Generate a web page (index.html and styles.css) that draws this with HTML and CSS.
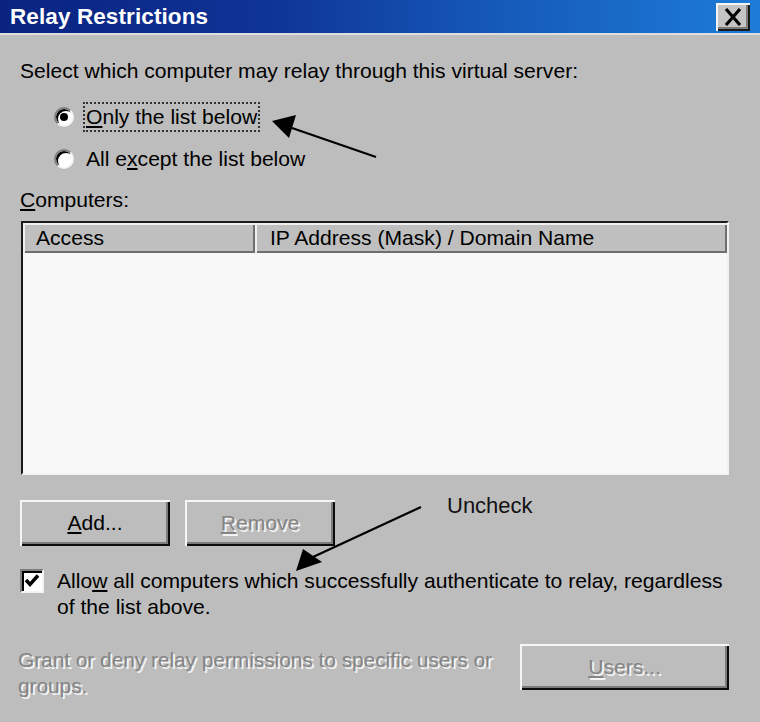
FILE: index.html
```html
<!DOCTYPE html>
<html>
<head>
<meta charset="utf-8">
<title>Relay Restrictions</title>
<link rel="stylesheet" href="styles.css">
</head>
<body>
<div class="window">
  <div class="titlebar">
    <span class="title">Relay Restrictions</span>
    <span class="close">
      <svg width="34" height="28" viewBox="0 0 34 28"><path d="M10 6 L24 22 M24 6 L10 22" stroke="#000" stroke-width="3.2" fill="none"/></svg>
    </span>
  </div>
  <div class="content">
    <p class="intro">Select which computer may relay through this virtual server:</p>
    <div class="radios">
      <div class="radio-row"><span class="radio checked"></span><span class="label focus"><u>O</u>nly the list below</span></div>
      <div class="radio-row"><span class="radio"></span><span class="label">All e<u>x</u>cept the list below</span></div>
    </div>
    <p class="caption"><u>C</u>omputers:</p>
    <div class="listbox">
      <div class="header">
        <div class="col col-access">Access</div>
        <div class="col col-ip">IP Address (Mask) / Domain Name</div>
      </div>
      <div class="list-body"></div>
    </div>
    <div class="buttons">
      <button class="btn btn-small"><u>A</u>dd...</button>
      <button class="btn btn-small disabled"><u>R</u>emove</button>
    </div>
    <div class="check-row">
      <span class="checkbox"><svg width="20" height="20" viewBox="0 0 20 20"><path d="M4 9 L8 13.5 L16 4.5" stroke="#000" stroke-width="3.4" fill="none"/></svg></span>
      <span class="check-label">Allo<u>w</u> all computers which successfully authenticate to relay, regardless<br>of the list above.</span>
    </div>
    <div class="users-row">
      <p class="disabled-text">Grant or deny relay permissions to specific users or<br>groups.</p>
      <button class="btn btn-users disabled"><u>U</u>sers...</button>
    </div>
  </div>
  <svg class="annot" width="760" height="722" viewBox="0 0 760 722">
    <line x1="292" y1="128" x2="376" y2="157" stroke="#000" stroke-width="2.2"/>
    <polygon points="272,121 296,115 289,138" fill="#000"/>
    <line x1="313" y1="557" x2="421" y2="507" stroke="#000" stroke-width="2.2"/>
    <polygon points="296,571 303,549 322,562" fill="#000"/>
  </svg>
  <span class="uncheck">Uncheck</span>
</div>
</body>
</html>
```

FILE: styles.css
```css
* { box-sizing: border-box; margin: 0; padding: 0; }
html, body { width: 760px; height: 722px; overflow: hidden; }
body {
  background: #bdbdbd;
  font-family: "Liberation Sans", Arial, sans-serif;
  font-size: 21.1px;
  color: #000;
}
u { text-decoration: underline; text-underline-offset: 2px; text-decoration-thickness: 2px; }

.window { position: relative; width: 760px; height: 722px; background: #bdbdbd; }

.titlebar {
  height: 35px;
  background: linear-gradient(90deg, #0a2380 0%, #0e3396 35%, #1559b8 65%, #1e7cd8 100%);
  border-bottom: 2px solid #dedede;
  display: flex;
  align-items: center;
  justify-content: space-between;
  padding: 0 10px;
}
.title {
  color: #fff;
  font-weight: bold;
  font-size: 22.5px;
  letter-spacing: 0.1px;
}
.close {
  width: 34px;
  height: 28px;
  background: #c4c4c4;
  box-shadow: inset 2px 2px 0 #f4f4f4, inset -2px -2px 0 #1a1a1a, inset -4px -4px 0 #7a7a7a;
  display: flex;
}

.content { padding: 0 31px 0 20px; }
.intro { margin-top: 23px; line-height: 26px; }

.radios { margin-top: 18px; display: flex; flex-direction: column; gap: 12px; }
.radio-row { height: 30px; display: flex; align-items: center; padding-left: 34px; gap: 9px; }
.radio {
  width: 20px; height: 20px; border-radius: 50%;
  background: #fff;
  border: 2px solid; border-color: #7e7e7e #f4f4f4 #f4f4f4 #7e7e7e;
  box-shadow: inset 2px 2px 0 #000;
  position: relative;
  flex: none;
}
.radio.checked::after {
  content: ""; position: absolute; left: 4px; top: 4px;
  width: 8px; height: 8px; border-radius: 50%; background: #000;
}
.label { height: 30px; line-height: 26px; padding: 0 1px; border: 2px dotted transparent; }
.label.focus { border-color: #333; }

.caption { margin-top: 13px; line-height: 26px; }

.listbox {
  margin-top: 8px;
  margin-left: 1px;
  height: 254px;
  border: 2px solid; border-color: #1a1a1a #f2f2f2 #f2f2f2 #1a1a1a;
  background: #f8f8f8;
  display: flex; flex-direction: column;
}
.header { height: 30px; display: flex; flex: none; }
.col {
  background: #bfbfbf;
  box-shadow: inset 2px 2px 0 #eeeeee, inset -2px -2px 0 #6e6e6e;
  line-height: 30px;
  padding-left: 13px;
}
.col-access { width: 232px; }
.col-ip { flex: 1; padding-left: 15px; }
.list-body { flex: 1; background: #f8f8f8; }

.buttons { margin-top: 25px; display: flex; gap: 15px; }
.btn {
  font: inherit;
  color: #000;
  background: #bdbdbd;
  border: none;
  height: 46px;
  box-shadow: inset 2px 2px 0 #f6f6f6, inset -2px -2px 0 #0c0c0c, inset -4px -4px 0 #7c7c7c;
  display: flex; align-items: center; justify-content: center;
  line-height: 26px;
}
.btn-small { width: 150px; }
.btn.disabled { color: #858585; text-shadow: 2px 2px 0 #f4f4f4; }

.check-row { margin-top: 22px; display: flex; align-items: flex-start; gap: 13px; }
.checkbox {
  width: 24px; height: 24px; flex: none; margin-top: 1px;
  background: #fff;
  border: 2px solid; border-color: #7e7e7e #f4f4f4 #f4f4f4 #7e7e7e;
  box-shadow: inset 2px 2px 0 #000;
  display: flex; align-items: center; justify-content: center;
}
.check-label { line-height: 26px; }

.users-row { margin-top: 24px; display: flex; justify-content: space-between; align-items: flex-start; }
.disabled-text {
  margin-left: -2px; padding-top: 3px; line-height: 26px;
  font-size: 20.8px;
  color: #858585; text-shadow: 2px 2px 0 #f4f4f4;
}
.btn-users { width: 209px; }

.annot { position: absolute; left: 0; top: 0; pointer-events: none; }
.uncheck {
  position: absolute; left: 447px; top: 493px;
  font-size: 22px; line-height: 26px; color: #111;
}
```
